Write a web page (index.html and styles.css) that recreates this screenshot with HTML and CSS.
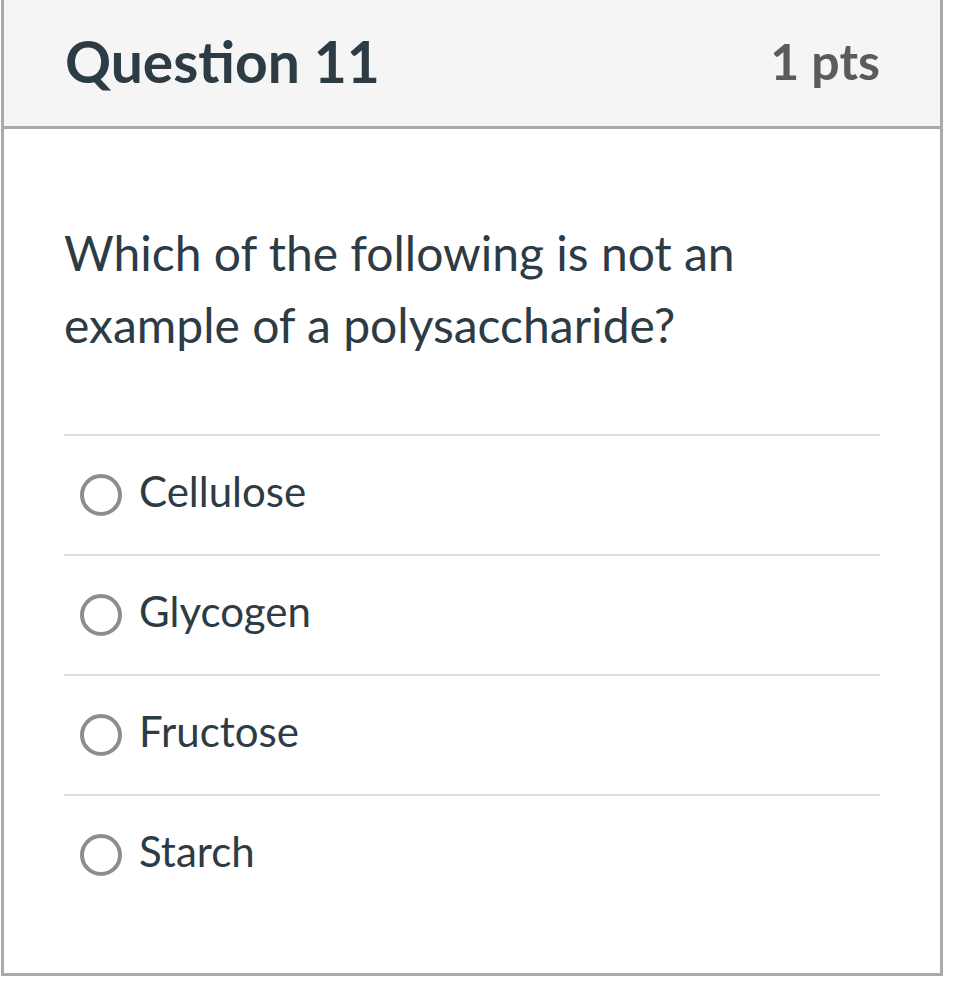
FILE: index.html
```html
<!DOCTYPE html>
<html lang="en">
<head>
<meta charset="utf-8">
<title>Question 11</title>
<link rel="stylesheet" href="styles.css">
</head>
<body>
<div class="question">
  <div class="header">
    <h2 class="title">Question 11</h2>
    <div class="points">1 pts</div>
  </div>
  <div class="content">
    <p class="text">Which of the following is not an example of a polysaccharide?</p>
    <div class="answers">
      <label class="answer"><span class="radio"></span><span class="label">Cellulose</span></label>
      <label class="answer"><span class="radio"></span><span class="label">Glycogen</span></label>
      <label class="answer"><span class="radio"></span><span class="label">Fructose</span></label>
      <label class="answer"><span class="radio"></span><span class="label">Starch</span></label>
    </div>
  </div>
</div>
</body>
</html>
```
FILE: styles.css
```css
html, body {
  margin: 0;
  padding: 0;
  background: #ffffff;
}
body {
  font-family: Lato, "Open Sans", sans-serif;
  color: #2d3b45;
}
.question {
  margin-left: 1px;
  width: 936px;
  border: 3px solid #aaaaaa;
  border-top: none;
  box-sizing: content-box;
}
.header {
  height: 126px;
  background: #f5f5f5;
  border-bottom: 3px solid #aaaaaa;
  display: flex;
  align-items: center;
  justify-content: space-between;
  padding: 0 60px 0 61px;
}
.title {
  margin: 0 0 4px;
  font-size: 57px;
  font-weight: 700;
  color: #2d3b45;
}
.points {
  margin-bottom: 4px;
  font-size: 50px;
  font-weight: 700;
  color: #5b5b5b;
}
.content {
  padding: 88px 60px 59px;
}
.text {
  margin: 0 0 73px;
  font-size: 48px;
  line-height: 72px;
  width: 760px;
}
.answer {
  display: flex;
  align-items: center;
  height: 118px;
  border-top: 2px solid #dddddd;
}
.radio {
  width: 34px;
  height: 34px;
  border: 4px solid #8d8d8d;
  border-radius: 50%;
  margin-left: 16px;
  margin-right: 17px;
  flex: none;
}
.label {
  font-size: 42px;
  margin-bottom: 9px;
}
```
